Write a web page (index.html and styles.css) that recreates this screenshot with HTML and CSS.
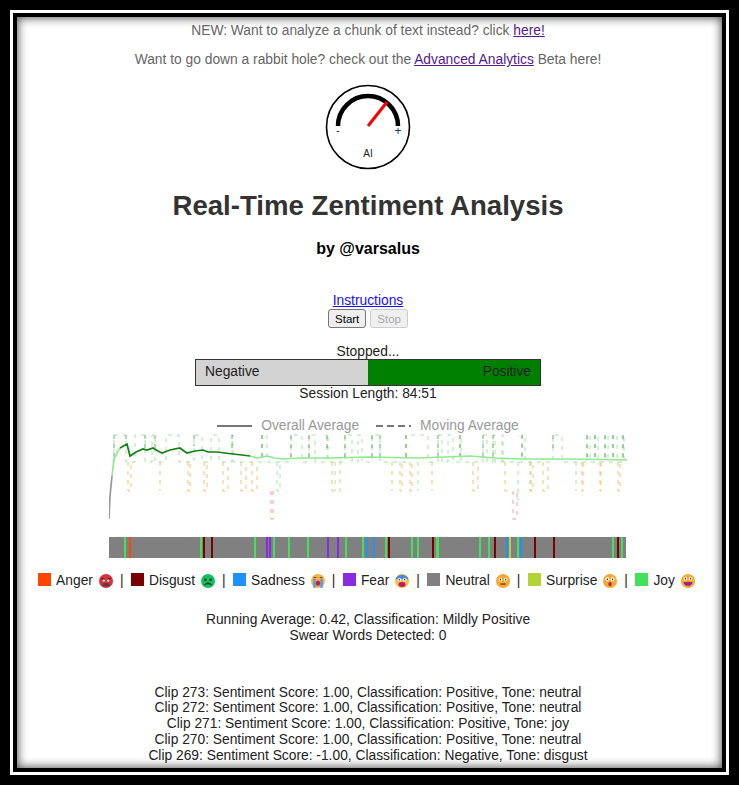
FILE: index.html
```html
<!DOCTYPE html>
<html lang="en">
<head>
    <meta charset="UTF-8">
    <meta name="viewport" content="width=device-width, initial-scale=1.0">
    <title>Real-Time Zentiment Analysis</title>
    <link rel="stylesheet" href="styles.css">
</head>
<body>
    <div class="marco">
        <div class="contenedor">
            <p class="aviso">NEW: Want to analyze a chunk of text instead? click <a href="#">here!</a></p>
            <p class="aviso aviso-dos">Want to go down a rabbit hole? check out the <a href="#">Advanced Analytics</a> Beta here!</p>

            <!-- logo -->
            <svg class="logo" width="86" height="86" viewBox="0 0 86 86">
                <circle cx="43" cy="43" r="41.5" fill="#fff" stroke="#000" stroke-width="1.6"/>
                <path d="M13 42 A30 30 0 0 1 73 42" fill="none" stroke="#000" stroke-width="4.5"/>
                <line x1="43" y1="42" x2="62" y2="18" stroke="#f00" stroke-width="3"/>
                <text x="13" y="50" class="logo-txt" text-anchor="middle">-</text>
                <text x="73" y="51" class="logo-txt logo-mas" text-anchor="middle">+</text>
                <text x="43" y="73" class="logo-txt" text-anchor="middle">AI</text>
            </svg>

            <h1 class="titulo">Real-Time Zentiment Analysis</h1>
            <h2 class="autor">by @varsalus</h2>

            <a class="instrucciones" href="#">Instructions</a>
            <div class="botones">
                <button class="boton">Start</button>
                <button class="boton" disabled>Stop</button>
            </div>

            <div class="estado">Stopped...</div>
            <div class="barra">
                <div class="barra-neg">Negative</div>
                <div class="barra-pos">Positive</div>
            </div>
            <div class="sesion">Session Length: 84:51</div>

            <div class="chart-leyenda">
                <span class="chart-item"><i class="linea"></i>Overall Average</span>
                <span class="chart-item"><i class="linea linea-rayas"></i>Moving Average</span>
            </div>

            <!-- grafico: origen x=109 y=432 en la pagina -->
            <svg class="grafico" width="520" height="90" viewBox="109 432 520 90">
                <path class="serie" stroke="#8fdc8f" d="M114 461V434H126V461H135V434H145V461H152V434H155V461H166V434H179V461H182V461H194V434H202V461H211V434H219V461H232V434H233V461H262V434H267V461H291V434H302V461H309V434H315V461H327V434H328V461H345V434H352V461H358V434H362V461H372V434H380V461H406V434H428V461H438V434H442V461H448V434H453V461H460V434H461V461H483V434H487V461H493V434H495V461H502V434H503V461H522V434H525V461H553V434H562V461H587V434H590V461H595V434H598V461H605V434H608V461H613V434H617V461H623V434H624V461"/>
                <path class="serie" stroke="#3f9f3f" d="M114 434V461M126 434V445M145 434V450M155 434V450M194 434V445M232 434V450M262 434V461M291 434V458M309 434V458M327 434V450M345 434V458M372 434V461M380 434V461M406 434V458M438 434V461M460 434V458M483 434V461M493 434V461M522 434V458M553 434V450M587 434V461M595 434V461M605 434V461M613 434V461M623 434V461"/>
                <path class="serie" stroke="#8fdc8f" d="M277 461V490H280V461M335 461V490M418 461V490M518 461V500M531 461V490M576 461V490"/>
                <path class="serie" stroke="#f5b04c" d="M128 461V490H131V461M160 461V490M188 461V490H190V461M204 461V490H207V461M223 461V490H228V461M241 461V490H246V461M252 461V490H257V461M332 461V490H340V461M392 461V490M400 461V490H402V461M410 461V490H412V461M432 461V490M473 461V490H478V461M505 461V490H508V490M530 461V490H533V461M543 461V490H548V461M582 461V490H583V461M600 461V490H601V461M618 461V490H620V461"/>
                <path class="serie" stroke="#f08a8a" d="M271 490V518H273V490M513 490V518H517V490"/>
                <path class="promedio" stroke="#9a9a9a" d="M109 518L110 495 112 475"/>
                <path class="promedio" stroke="#90e890" d="M112 475L114 458 118 450 120 447"/>
                <path class="promedio" stroke="#128012" d="M120 447L127 443 130 455 136 451 143 448 147 449 153 447 158 450 162 452 170 449 180 447 184 450 187 452 195 450 203 449 208 451 217 451 225 452 233 453 242 454 250 455"/>
                <path class="promedio" stroke="#90e890" d="M250 455L257 457 267 455 275 457 283 458 300 457 330 457 367 456 417 457 445 456 470 455 495 457 520 458 570 458 627 459"/>
            </svg>

            <svg class="tira" width="517" height="21" viewBox="109 537 517 21">
                <rect x="109" y="537" width="517" height="21" fill="#808080"/>
                <g fill="#45e05a">
                    <rect x="124" y="537" width="2" height="21"/>
                    <rect x="200" y="537" width="2" height="21"/>
                    <rect x="254" y="537" width="2" height="21"/>
                    <rect x="273" y="537" width="2" height="21"/>
                    <rect x="288" y="537" width="2" height="21"/>
                    <rect x="307" y="537" width="2" height="21"/>
                    <rect x="345" y="537" width="2" height="21"/>
                    <rect x="362" y="537" width="2" height="21"/>
                    <rect x="385" y="537" width="2" height="21"/>
                    <rect x="411" y="537" width="2" height="21"/>
                    <rect x="417" y="537" width="2" height="21"/>
                    <rect x="436" y="537" width="3" height="21"/>
                    <rect x="479" y="537" width="2" height="21"/>
                    <rect x="488" y="537" width="2" height="21"/>
                    <rect x="517" y="537" width="2" height="21"/>
                    <rect x="612" y="537" width="2" height="21"/>
                    <rect x="621" y="537" width="2" height="21"/>
                </g>
                <g fill="#7b0000">
                    <rect x="203" y="537" width="2" height="21"/>
                    <rect x="211" y="537" width="2" height="21"/>
                    <rect x="388" y="537" width="2" height="21"/>
                    <rect x="432" y="537" width="2" height="21"/>
                    <rect x="494" y="537" width="2" height="21"/>
                    <rect x="534" y="537" width="2" height="21"/>
                    <rect x="553" y="537" width="2" height="21"/>
                    <rect x="617" y="537" width="2" height="21"/>
                </g>
                <g fill="#8a2be2">
                    <rect x="266" y="537" width="2" height="21"/>
                    <rect x="269" y="537" width="2" height="21"/>
                    <rect x="327" y="537" width="2" height="21"/>
                    <rect x="337" y="537" width="2" height="21"/>
                </g>
                <g fill="#1e90ff">
                    <rect x="366" y="537" width="2" height="21"/>
                    <rect x="373" y="537" width="2" height="21"/>
                    <rect x="506" y="537" width="2" height="21"/>
                    <rect x="520" y="537" width="2" height="21"/>
                </g>
                <rect x="129" y="537" width="2" height="21" fill="#ff4500"/>
                <rect x="509" y="537" width="2" height="21" fill="#b5d334"/>
            </svg>

            <div class="leyenda">
                <i class="cuadro c-anger"></i><span>Anger</span>
                <svg class="cara" viewBox="0 0 16 16"><circle cx="8" cy="8" r="8" fill="#d8323c"/><path d="M3 5l3.500 1.500M13 5L9.500 6.500" stroke="#40181c" stroke-width="1.400"/><circle cx="5.500" cy="7.500" r="1.300" fill="#fff"/><circle cx="10.500" cy="7.500" r="1.300" fill="#fff"/><rect x="4" y="10.500" width="8" height="3.500" rx="1.500" fill="#5a3a48"/></svg>
                <b class="sep">|</b>
                <i class="cuadro c-disgust"></i><span>Disgust</span>
                <svg class="cara" viewBox="0 0 16 16"><circle cx="8" cy="8" r="8" fill="#14c060"/><circle cx="5" cy="6.500" r="1.500" fill="#12402a"/><circle cx="11" cy="6.500" r="1.500" fill="#12402a"/><path d="M4 13c1-3 7-3 8 0" fill="none" stroke="#12402a" stroke-width="1.500"/><path d="M8 9v3" stroke="#12402a"/></svg>
                <b class="sep">|</b>
                <i class="cuadro c-sadness"></i><span>Sadness</span>
                <svg class="cara" viewBox="0 0 16 16"><circle cx="8" cy="8" r="8" fill="#f8b03c"/><rect x="2.500" y="5" width="3" height="11" rx="1.500" fill="#5a9ce8"/><rect x="10.500" y="5" width="3" height="11" rx="1.500" fill="#5a9ce8"/><ellipse cx="8" cy="10.500" rx="2.500" ry="3" fill="#c02050"/><path d="M3 4h3M10 4h3" stroke="#5a3a20"/></svg>
                <b class="sep">|</b>
                <i class="cuadro c-fear"></i><span>Fear</span>
                <svg class="cara" viewBox="0 0 16 16"><circle cx="8" cy="8" r="8" fill="#f8c040"/><path d="M.500 6a8 8 0 0 1 15 0z" fill="#4a86e8"/><circle cx="5" cy="6.500" r="2" fill="#fff"/><circle cx="11" cy="6.500" r="2" fill="#fff"/><circle cx="5" cy="6.500" r=".800" fill="#222"/><circle cx="11" cy="6.500" r=".800" fill="#222"/><ellipse cx="8" cy="12" rx="4" ry="2.800" fill="#c0186a"/></svg>
                <b class="sep">|</b>
                <i class="cuadro c-neutral"></i><span>Neutral</span>
                <svg class="cara" viewBox="0 0 16 16"><circle cx="8" cy="8" r="8" fill="#f8a830"/><circle cx="5" cy="6.500" r="2" fill="#fff"/><circle cx="11" cy="6.500" r="2" fill="#fff"/><circle cx="5" cy="6.500" r=".900" fill="#222"/><circle cx="11" cy="6.500" r=".900" fill="#222"/><path d="M5 11.500h6" stroke="#5a3010" stroke-width="1.300"/></svg>
                <b class="sep">|</b>
                <i class="cuadro c-surprise"></i><span>Surprise</span>
                <svg class="cara" viewBox="0 0 16 16"><circle cx="8" cy="8" r="8" fill="#f8a830"/><circle cx="5" cy="6" r="2.200" fill="#fff"/><circle cx="11" cy="6" r="2.200" fill="#fff"/><circle cx="5" cy="6" r=".900" fill="#222"/><circle cx="11" cy="6" r=".900" fill="#222"/><ellipse cx="8" cy="11.500" rx="2" ry="2.500" fill="#b02a50"/></svg>
                <b class="sep">|</b>
                <i class="cuadro c-joy"></i><span>Joy</span>
                <svg class="cara" viewBox="0 0 16 16"><circle cx="8" cy="8" r="8" fill="#f8a830"/><circle cx="5" cy="5.500" r="2" fill="#fff"/><circle cx="11" cy="5.500" r="2" fill="#fff"/><circle cx="5" cy="5.500" r=".900" fill="#222"/><circle cx="11" cy="5.500" r=".900" fill="#222"/><path d="M3 9h10c0 6-10 6-10 0z" fill="#a02090"/></svg>
            </div>

            <div class="promedios">
                <div>Running Average: 0.42, Classification: Mildly Positive</div>
                <div>Swear Words Detected: 0</div>
            </div>

            <ul class="clips">
                <li>Clip 273: Sentiment Score: 1.00, Classification: Positive, Tone: neutral</li>
                <li>Clip 272: Sentiment Score: 1.00, Classification: Positive, Tone: neutral</li>
                <li>Clip 271: Sentiment Score: 1.00, Classification: Positive, Tone: joy</li>
                <li>Clip 270: Sentiment Score: 1.00, Classification: Positive, Tone: neutral</li>
                <li>Clip 269: Sentiment Score: -1.00, Classification: Negative, Tone: disgust</li>
            </ul>
        </div>
    </div>
</body>
</html>
```

FILE: styles.css
```css
*{
    box-sizing: border-box;
}
html, body{
    margin: 0;
    height: 100%;
    background-color: #000;
}
body{
    padding: 10px;
    font-family: "Liberation Sans", Arial, sans-serif;
    font-size: 13.8px;
    color: #222;
}
.marco{
    height: 100%;
    border: 3px solid #fff;
}
.contenedor{
    height: 100%;
    overflow: hidden;
    border: 4px solid #000;
    background-color: #fff;
    box-shadow: inset 0 0 10px 1px #555;
    display: flex;
    flex-direction: column;
    align-items: center;
    text-align: center;
    padding: 5px 3px 0 0;
}
.aviso{
    margin: 0;
    line-height: 17px;
    color: #666;
}
.aviso-dos{
    margin-top: 12px;
}
.aviso a{
    color: #551a8b;
}
.logo{
    display: block;
    margin-top: 16px;
    flex: none;
}
.logo-txt{
    font-family: "Liberation Sans", Arial, sans-serif;
    font-size: 10px;
    fill: #222;
}
.logo-mas{
    font-size: 12px;
    fill: #1a3a6a;
}
.titulo{
    margin: 18px 0 0;
    font-size: 27.6px;
    line-height: 35px;
    color: #333;
}
.autor{
    margin: 17px 0 0;
    font-size: 16px;
    line-height: 18px;
    color: #000;
}
.instrucciones{
    margin-top: 34px;
    line-height: 17px;
    color: #1a0dff;
}
.botones{
    display: flex;
    gap: 4px;
    margin-top: 0;
}
.boton{
    font-family: "Liberation Sans", Arial, sans-serif;
    font-size: 11.5px;
    height: 19px;
    padding: 0 6px;
    color: #000;
    background-color: #efefef;
    border: 1px solid #767676;
    border-radius: 3px;
}
.boton:disabled{
    color: #aaa;
    background-color: #f0f0f0;
    border-color: #ccc;
}
.estado{
    margin-top: 15px;
    height: 16px;
    line-height: 18px;
}
.barra{
    display: flex;
    flex: none;
    width: 346px;
    height: 27px;
    border: 1px solid #333;
    line-height: 24px;
}
.barra-neg{
    width: 50%;
    padding-left: 9px;
    text-align: left;
    background-color: #d3d3d3;
}
.barra-pos{
    width: 50%;
    padding-right: 9px;
    text-align: right;
    background-color: green;
}
.sesion{
    height: 14px;
    line-height: 16px;
}
.chart-leyenda{
    display: flex;
    gap: 17px;
    margin-top: 17px;
    line-height: 17px;
    color: #999;
}
.chart-item{
    display: flex;
    align-items: center;
    gap: 9px;
}
.linea{
    width: 35px;
    height: 2px;
    background-color: #777;
}
.linea-rayas{
    background: repeating-linear-gradient(90deg, #777 0 7px, transparent 7px 11px);
}
.grafico{
    display: block;
    flex: none;
    margin: -1px 0 0 2px;
}
.serie{
    fill: none;
    stroke-width: 0.8;
    stroke-dasharray: 4 5;
}
.promedio{
    fill: none;
    stroke-width: 1.7;
}
.tira{
    display: block;
    flex: none;
    margin: 14px 1px 0 0;
}
.leyenda{
    display: flex;
    align-items: center;
    margin: 14px 3px 0 0;
    height: 17px;
    flex: none;
}
.leyenda span{
    margin-left: 5px;
}
.cuadro{
    width: 13px;
    height: 13px;
    margin-bottom: 3px;
}
.c-anger{ background-color: #ff4500; }
.c-disgust{ background-color: #7b0000; }
.c-sadness{ background-color: #1e90ff; }
.c-fear{ background-color: #8a2be2; }
.c-neutral{ background-color: #808080; }
.c-surprise{ background-color: #b5d334; }
.c-joy{ background-color: #45e05a; }
.cara{
    width: 14px;
    height: 14px;
    margin-left: 6px;
}
.sep{
    font-weight: normal;
    margin: 0 7.5px 0 7px;
}
.promedios{
    margin-top: 23px;
    line-height: 15.75px;
}
.clips{
    list-style: none;
    margin: 41px 0 0;
    padding: 0;
    line-height: 15.75px;
}
```
